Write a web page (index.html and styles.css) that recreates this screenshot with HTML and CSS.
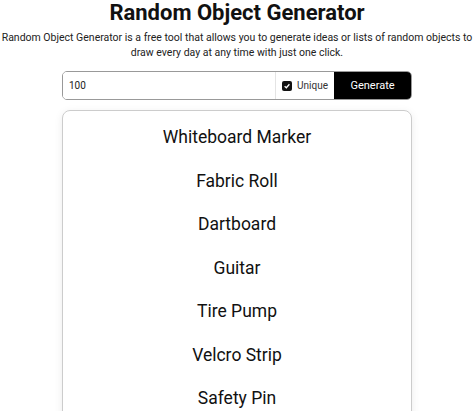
FILE: index.html
```html
<!DOCTYPE html>
<html>
<head>
  <title>Random Object Generator</title>
  <link rel="stylesheet" href="styles.css">
</head>
<body>

<div class="page">
  <h1>Random Object Generator</h1>
  <p class="intro">Random Object Generator is a free tool that allows you to generate ideas or lists of random objects to draw every day at any time with just one click.</p>

  <form class="controls" onsubmit="return false">
    <input class="count" type="text" value="100">
    <label class="unique">
      <span class="box">
        <svg viewBox="0 0 10 10" width="8" height="8"><path d="M2 5.2 L4.2 7.2 L8 2.8" fill="none" stroke="#fff" stroke-width="1.6"/></svg>
      </span>
      Unique
    </label>
    <button class="generate">Generate</button>
  </form>

  <div class="results">
    <div class="item">Whiteboard Marker</div>
    <div class="item">Fabric Roll</div>
    <div class="item">Dartboard</div>
    <div class="item">Guitar</div>
    <div class="item">Tire Pump</div>
    <div class="item">Velcro Strip</div>
    <div class="item">Safety Pin</div>
  </div>
</div>

</body>
</html>
```

FILE: styles.css
```css
* {
  margin: 0;
  padding: 0;
  box-sizing: border-box;
}

body {
  font-family: Roboto, "Liberation Sans", sans-serif;
  background-color: #fff;
  color: #111;
  overflow: hidden;
}

.page {
  display: flex;
  flex-direction: column;
  align-items: center;
}

h1 {
  font-size: 22px;
  font-weight: 700;
  line-height: 26px;
  color: #111;
}

.intro {
  width: 474px;
  font-size: 10.5px;
  line-height: 15px;
  text-align: center;
  margin-top: 4px;
  color: #222;
}

.controls {
  width: 350px;
  height: 29px;
  margin-top: 11px;
  display: flex;
  border: 1px solid #999;
  border-radius: 5px;
  overflow: hidden;
}

.count {
  flex: 1;
  border: none;
  outline: none;
  padding-left: 6px;
  font-family: inherit;
  font-size: 10px;
  color: #222;
  border-right: 1px solid #e4e4e4;
}

.unique {
  display: flex;
  align-items: center;
  gap: 5px;
  padding: 0 6px;
  font-size: 10px;
  color: #333;
}

.box {
  width: 10px;
  height: 10px;
  background-color: #111;
  border-radius: 2px;
  display: flex;
  align-items: center;
  justify-content: center;
}

.generate {
  width: 77px;
  border: none;
  background-color: #000;
  color: #fff;
  font-family: inherit;
  font-size: 11px;
}

.results {
  width: 350px;
  margin-top: 10px;
  border: 1px solid #ccc;
  border-radius: 8px;
  box-shadow: 0 2px 8px rgba(0, 0, 0, 0.08);
  padding-top: 5px;
}

.item {
  font-size: 17.5px;
  line-height: 43.5px;
  text-align: center;
  color: #111;
}
```
